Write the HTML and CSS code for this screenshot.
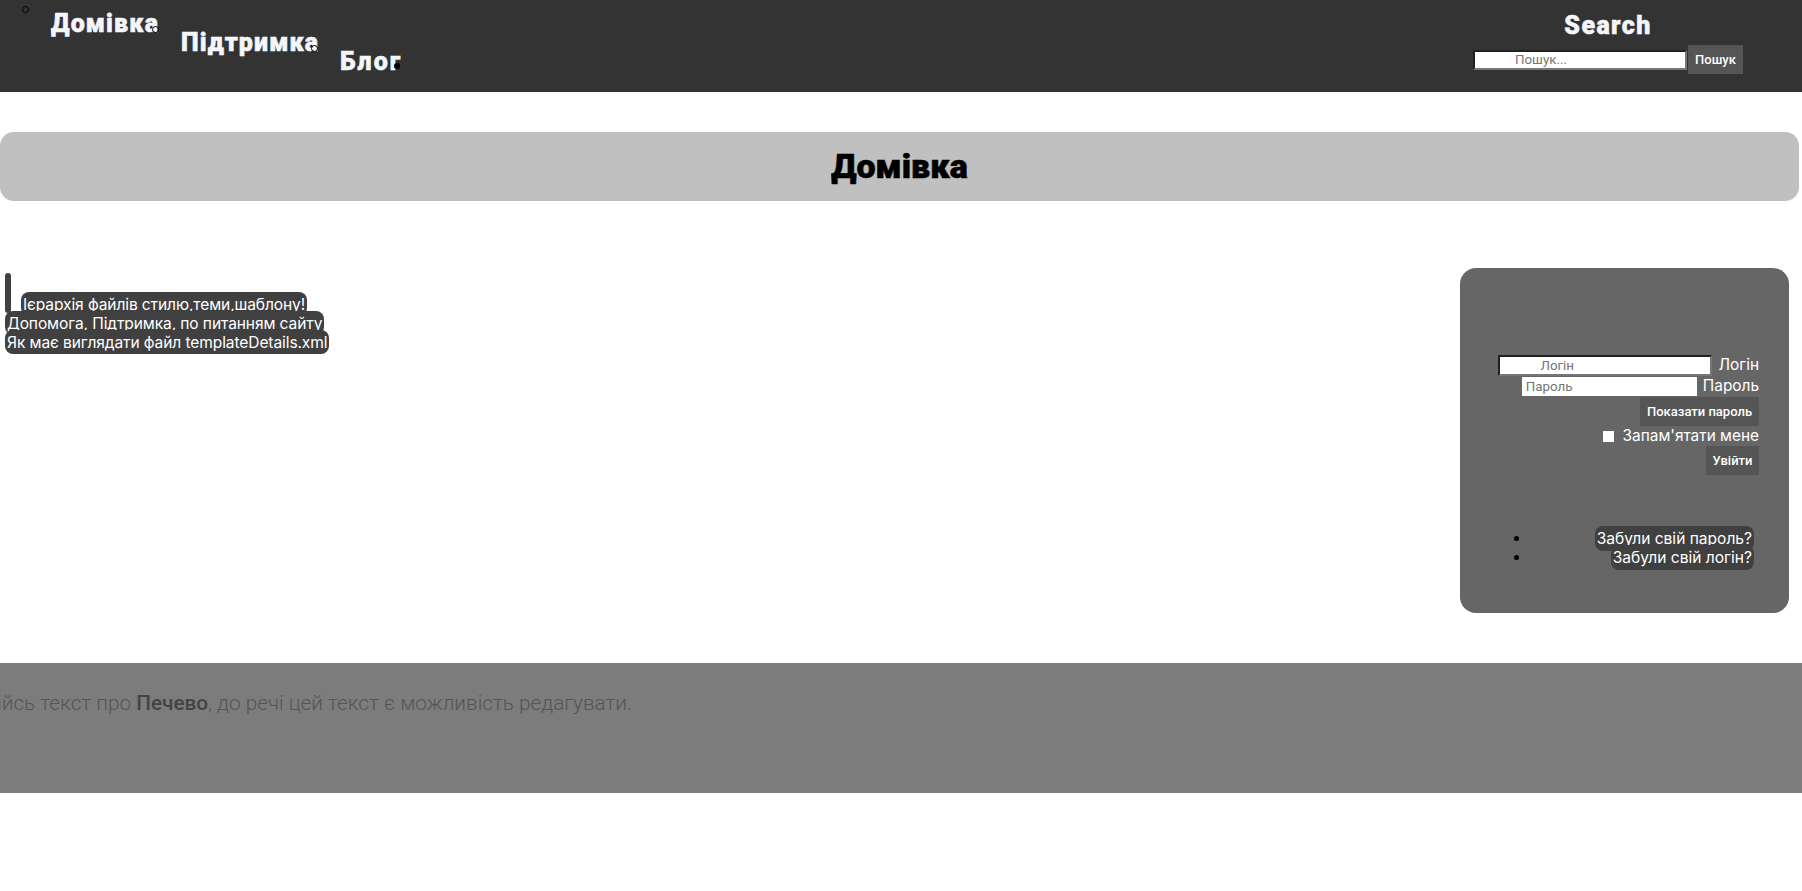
FILE: index.html
```html
<!DOCTYPE html>
<html lang="uk">
<head>
<meta charset="utf-8">
<title>Домівка</title>
<link rel="stylesheet" href="styles.css">
</head>
<body>
<header class="top">
  <span class="ring ring-top"></span>
  <ul class="nav">
    <li class="nav-item nav-1"><a href="#">Домівка</a><span class="ring ring-end"></span></li>
    <li class="nav-item nav-2"><a href="#">Підтримка</a><span class="ring ring-end"></span></li>
    <li class="nav-item nav-3"><a href="#">Блог</a><span class="dot-end"></span></li>
  </ul>
  <div class="search">
    <div class="search-title">Search</div>
    <form class="search-form">
      <input class="search-input" type="text" placeholder="Пошук...">
      <button class="btn search-btn" type="button">Пошук</button>
    </form>
  </div>
</header>

<h1 class="title">Домівка</h1>

<main class="content">
  <div class="articles">
    <span class="bar"></span>
    <ul class="links">
      <li class="link-row link-first"><a href="#">Ієрархія файлів стилю,теми,шаблону!</a></li>
      <li class="link-row"><a href="#">Допомога, Підтримка, по питанням сайту</a></li>
      <li class="link-row"><a href="#">Як має виглядати файл templateDetails.xml</a></li>
    </ul>
  </div>
  <aside class="side">
    <form class="login">
      <div class="row row-login"><input class="login-input" type="text" placeholder="Логін"><label class="lbl">Логін</label></div>
      <div class="row row-pass"><input class="pass-input" type="text" placeholder="Пароль"><label class="lbl">Пароль</label></div>
      <div class="row"><button class="btn side-btn" type="button">Показати пароль</button></div>
      <div class="row remember"><span class="check"></span><label class="lbl">Запам'ятати мене</label></div>
      <div class="row"><button class="btn side-btn enter" type="button">Увійти</button></div>
    </form>
    <ul class="forgot">
      <li class="forgot-row"><span class="bullet"></span><a href="#">Забули свій пароль?</a></li>
      <li class="forgot-row"><span class="bullet"></span><a href="#">Забули свій логін?</a></li>
    </ul>
  </aside>
</main>

<footer class="foot">
  <p class="foot-text"><span>Якийсь текст про <strong>Печево</strong>, до речі цей текст є можливість редагувати.</span></p>
</footer>
</body>
</html>
```
FILE: styles.css
```css
* { box-sizing: border-box; }
html, body { margin: 0; padding: 0; }
body { height: 891px; overflow: hidden; background: #fff; font-family: "Inter", "Liberation Sans", sans-serif; }
ul { list-style: none; margin: 0; padding: 0; }
a { color: inherit; text-decoration: none; }

.top { position: relative; display: flex; justify-content: space-between; height: 92px; background: #333; }
.ring { position: absolute; width: 7px; height: 7px; border: 1px solid #000; border-radius: 50%; }
.ring-top { left: 22px; top: 6px; }
.nav { display: flex; padding-left: 51px; }
.nav-item { position: relative; height: 28px; font-family: "Roboto", sans-serif; font-weight: 900; font-size: 25px; line-height: 28px; letter-spacing: 1.1px; -webkit-text-stroke: 0.5px #f4f6fa; color: #f4f6fa; white-space: nowrap; }
.nav-1 { margin-top: 10px; width: 130px; }
.nav-2 { margin-top: 29px; width: 159px; }
.nav-3 { margin-top: 48px; letter-spacing: 2px; }
.ring-end { left: 101px; top: 16px; width: 7px; height: 7px; }
.nav-2 .ring-end { left: 130px; }
.dot-end { position: absolute; left: 54px; top: 15px; width: 6px; height: 6px; border-radius: 50%; background: #000; }

.search { display: flex; flex-direction: column; align-items: center; width: 270px; margin-right: 59px; padding-top: 12px; }
.search-title { font-family: "Roboto", sans-serif; font-weight: 900; font-size: 25px; line-height: 28px; letter-spacing: 1.4px; -webkit-text-stroke: 0.5px #f4f6fa; color: #f4f6fa; }
.search-form { display: flex; align-items: center; margin-top: 5px; }
.search-input { width: 214px; height: 20px; padding: 0 0 0 40px; border: 2px inset #767676; background: #fff; font-family: "Roboto", sans-serif; font-size: 13.33px; margin-right: 1px; }
.btn { border: 0; background: #555; color: #fff; font-family: "Roboto", sans-serif; font-weight: 500; font-size: 13px; }
.search-btn { width: 55px; height: 29px; padding: 0; }

.title { height: 69px; margin: 40px 3px 0 0; background: #c0c0c0; border-radius: 14px; color: #000; font-family: "Roboto", sans-serif; font-weight: 900; font-size: 34px; line-height: 69px; text-align: center; -webkit-text-stroke: 0.6px #000; }

.content { display: flex; justify-content: space-between; margin-top: 67px; padding: 0 13px 0 5px; }
.articles { position: relative; width: 340px; padding-top: 24px; }
.bar { position: absolute; left: 0; top: 5px; width: 6px; height: 40px; background: #404040; border-radius: 3px; }
.link-row { height: 19px; font-size: 15.55px; font-weight: 400; line-height: 26px; letter-spacing: -0.1px; color: #fff; white-space: nowrap; }
.link-row a { display: inline-block; height: 24px; padding: 0 2px; background: #404040; border-radius: 8px; }
.link-first { padding-left: 16px; }

.side { width: 329px; height: 345px; padding: 87px 30px 0 0; background: #666; border-radius: 16px; color: #fff; }
.login { display: flex; flex-direction: column; }
.row { display: flex; justify-content: flex-end; align-items: center; }
.row-login { height: 21px; }
.row-pass { height: 21px; }
.lbl { font-size: 15.4px; font-weight: 400; line-height: 20px; position: relative; top: -1px; }
.remember .lbl { top: 0; }
.login-input { width: 214px; height: 21px; margin-right: 6px; padding: 0 0 0 40px; border: 2px inset #767676; background: #fff; font-family: "Roboto", sans-serif; font-size: 13.33px; }
.pass-input { width: 175px; height: 19px; margin: 1px 6px 1px 0; padding: 0 4px; border: 0; background: #fff; font-family: "Roboto", sans-serif; font-size: 13.33px; }
.side-btn { width: 119px; height: 29px; padding: 0; }
.remember { height: 20px; }
.check { width: 11px; height: 11px; margin-right: 9px; background: #fff; }
.enter { width: 53px; }

.forgot { margin-top: 51px; padding: 0 5px 0 54px; }
.forgot-row { display: flex; justify-content: space-between; height: 19px; font-size: 15.55px; font-weight: 400; line-height: 25px; }
.forgot-row a { display: block; height: 25px; padding: 0 2px; background: #404040; border-radius: 8px; }
.bullet { width: 5px; height: 5px; margin-top: 10px; border-radius: 50%; background: #000; }

.foot { height: 130px; margin-top: 50px; padding-top: 27px; background: #7c7c7c; color: #555; overflow: hidden; }
.foot-text { display: flex; justify-content: flex-end; width: 632px; margin: 0; font-family: "Roboto", sans-serif; font-size: 20.75px; font-weight: 300; line-height: 26px; white-space: nowrap; }
.foot-text strong { font-weight: 500; color: #444; }
```
